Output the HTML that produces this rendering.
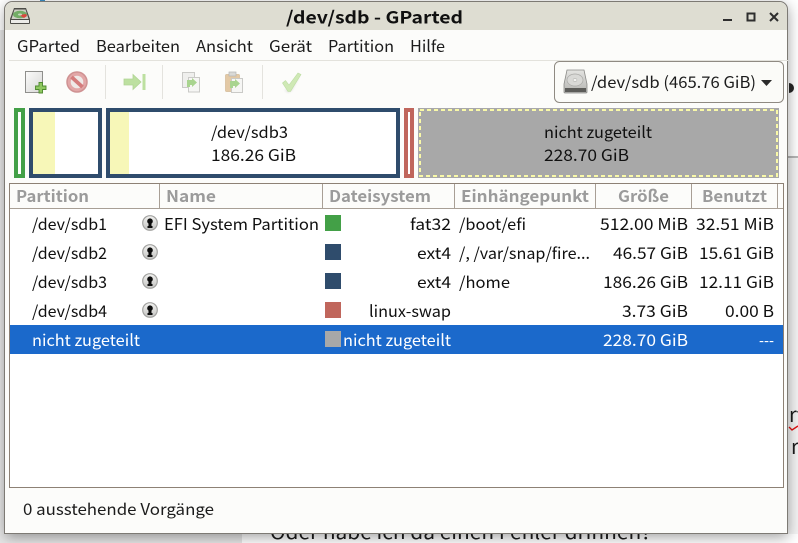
<!DOCTYPE html>
<html><head><meta charset="utf-8"><style>
html,body{margin:0;padding:0;width:798px;height:543px;overflow:hidden;background:#fff}
#w{position:absolute;left:4.5px;top:1.5px;width:783px;height:532px;border-radius:8px 8px 2px 2px;box-shadow:0 3px 14px rgba(0,0,0,.38)}
svg{position:absolute;left:0;top:0}
text{font-family:"Noto Sans CJK JP","Liberation Sans",sans-serif;font-size:16px;fill:#1c1c1c}
.h{font-weight:bold;fill:#9b9b9b}
.d{fill:#101010}
.w{fill:#fff}
</style></head><body>
<svg width="798" height="543" style="z-index:0">
<rect x="0" y="0" width="798" height="543" fill="#fff"/>
<rect x="0" y="30" width="5" height="513" fill="#e8e8e8"/>
<rect x="788" y="157" width="10" height="386" fill="#f3f3f3"/>
<rect x="788" y="156" width="10" height="2" fill="#b5b5b5"/>
<rect x="0" y="534" width="242" height="9" fill="#e6e6e6"/>
<rect x="242" y="534" width="556" height="9" fill="#fff"/>
<rect x="40" y="0" width="5" height="2" fill="#3a8fc8"/>
<text x="270" y="539" textLength="381" lengthAdjust="spacingAndGlyphs" style="font-size:20px" fill="#222">Oder habe ich da einen Fehler drinnen?</text>
<text x="789" y="422" style="font-size:20px">rt</text>
<text x="791" y="454" style="font-size:20px">r</text>
<path d="M789 427l3 3 6-4" fill="none" stroke="#e01010" stroke-width="1.4"/>
</svg>
<div id="w" style="z-index:1"></div>
<svg width="798" height="543" style="z-index:2">
<defs>
<linearGradient id="kg" x1="0" y1="0" x2="0" y2="1"><stop offset="0" stop-color="#f2f2f0"/><stop offset="1" stop-color="#c4c4c2"/></linearGradient>
<linearGradient id="dg" x1="0" y1="0" x2="0" y2="1"><stop offset="0" stop-color="#e4e4e1"/><stop offset="1" stop-color="#b4b4b1"/></linearGradient>
<linearGradient id="ng" x1="0" y1="0" x2="1" y2="1"><stop offset="0" stop-color="#fbfbfa"/><stop offset="1" stop-color="#d8d8d6"/></linearGradient>
<filter id="sh" x="-30%" y="-30%" width="160%" height="160%"><feGaussianBlur stdDeviation="1"/></filter>
<g id="k"><circle cx="0" cy="0" r="7.300" fill="url(#kg)" stroke="#a2a2a0" stroke-width="1.200"/><circle cx="0" cy="-1.800" r="2.800" fill="#0d0d0d"/><rect x="-1.500" y="-1" width="3" height="5" fill="#0d0d0d"/><rect x="-2.500" y="3" width="5" height="2" fill="#0d0d0d"/></g>
</defs>
<!-- window -->
<path d="M4.5 533.5V10a8 8 0 0 1 8-8.5H779.5a8 8 0 0 1 8 8.5V533.5Z" fill="#fcfcfa" stroke="#7d7a74"/>
<path d="M5 30V10a8 8 0 0 1 8-8H779a8 8 0 0 1 8 8V30Z" fill="#deddd2"/>
<!-- app icon -->
<g>
<path d="M14 8h12l4 11v4a1 1 0 0 1-1 1H11a1 1 0 0 1-1-1v-4Z" fill="#4d4d48"/>
<path d="M14.500 9.500h11l3 9.500H11.500Z" fill="#cfcfc6"/>
<ellipse cx="20" cy="14.500" rx="7" ry="3.800" fill="#73ad66"/>
<path d="M19 15l7-1 1 2-3 2Z" fill="#d9473e"/>
<ellipse cx="20" cy="14.500" rx="2" ry="1" fill="#c7d8bf"/>
<rect x="11" y="20" width="18" height="3" fill="#ecece8"/>
</g>
<text x="286" y="23.500" class="d" style="font-weight:bold;font-size:17px" textLength="177" lengthAdjust="spacingAndGlyphs">/dev/sdb - GParted</text>
<!-- window buttons -->
<rect x="723" y="19" width="9" height="2" fill="#2e2e2e"/>
<rect x="747.500" y="13.500" width="7" height="7" fill="none" stroke="#2e2e2e" stroke-width="2"/>
<path d="M770 13l8 8M778 13l-8 8" stroke="#2e2e2e" stroke-width="2" fill="none"/>
<!-- menu -->
<text x="17" y="52" textLength="63" lengthAdjust="spacingAndGlyphs">GParted</text>
<text x="96" y="52" textLength="84" lengthAdjust="spacingAndGlyphs">Bearbeiten</text>
<text x="196" y="52" textLength="57" lengthAdjust="spacingAndGlyphs">Ansicht</text>
<text x="269" y="52" textLength="43" lengthAdjust="spacingAndGlyphs">Gerät</text>
<text x="328" y="52" textLength="66" lengthAdjust="spacingAndGlyphs">Partition</text>
<text x="410" y="52" textLength="35" lengthAdjust="spacingAndGlyphs">Hilfe</text>
<rect x="9" y="60" width="779" height="1" fill="#e3e2dc"/>
<!-- toolbar -->
<rect x="105" y="65" width="1" height="34" fill="#e4e3de"/>
<rect x="162" y="65" width="1" height="34" fill="#e4e3de"/>
<rect x="262" y="65" width="1" height="34" fill="#e4e3de"/>
<!-- new -->
<path d="M25.500 71.500h17v21h-17Z" fill="url(#ng)" stroke="#8f8f8c"/>
<path d="M39 82.500h3.500v3.500H46v3.500h-3.500V93H39v-3.500h-3.500V86H39Z" fill="#8fc860" stroke="#4f8a30" stroke-width=".9"/>
<!-- delete -->
<circle cx="77" cy="82" r="10" fill="#e2a7a7" stroke="#cf9292" stroke-width="1.500"/>
<circle cx="77" cy="82" r="6.300" fill="#efe9e7"/>
<path d="M71.500 77l11 10" stroke="#d47c7c" stroke-width="3.800"/>
<!-- apply arrow -->
<path d="M124 79h9v-4.500l8 7.500-8 7.500v-4.500h-9Z" fill="#bde0a0" stroke="#b0d494" stroke-width=".8"/>
<rect x="142.500" y="74" width="3" height="16" fill="#bde0a0"/>
<!-- copy -->
<rect x="182.500" y="72.500" width="12" height="15" fill="#efefed" stroke="#cacac7"/>
<rect x="188.500" y="77.500" width="11" height="14.500" fill="#f6f6f4" stroke="#cacac7"/>
<path d="M187 80h5v-2l5 4.500-5 4.500v-2h-2v2h-3Z" fill="#a9d48f"/>
<!-- paste -->
<rect x="225.500" y="74.500" width="14" height="17" rx="1" fill="#e3c9a5" stroke="#d4bb98" stroke-width=".7"/>
<rect x="229" y="72" width="7" height="4" fill="#d9d9d6" stroke="#b5b5b2" stroke-width=".7"/>
<rect x="231.500" y="78.500" width="11" height="14" fill="#f6f6f4" stroke="#cacac7"/>
<path d="M230 81h5v-2l5 4.500-5 4.500v-2h-2v2h-3Z" fill="#a9d48f"/>
<!-- check -->
<path d="M284 90l4-1 11-12 2-3-9 17-4 2Z" fill="#000" opacity=".08" filter="url(#sh)"/>
<path d="M282.500 83l3-2.500 3.500 4.500 9-12 3 1.500-10.500 17h-2.500Z" fill="#cfe9b5" stroke="#bcdca2" stroke-width=".6"/>
<!-- combo -->
<rect x="554.500" y="61.500" width="229" height="41" rx="5" fill="#fbfbf8" stroke="#8f8a82"/>
<path d="M567 70h17l3 14v8a1 1 0 0 1-1 1h-21a1 1 0 0 1-1-1v-8Z" fill="url(#dg)" stroke="#8a8a87" stroke-width=".8"/>
<ellipse cx="575" cy="80" rx="8" ry="6" fill="#d9d9d6" stroke="#a9a9a6" stroke-width=".7"/>
<ellipse cx="575" cy="80" rx="2" ry="1.500" fill="#f2f2f0" stroke="#a9a9a6" stroke-width=".5"/>
<rect x="565" y="88" width="21" height="4" fill="#5c5c59"/>
<text x="591" y="88" textLength="165" lengthAdjust="spacingAndGlyphs" fill="#2b2b2b">/dev/sdb (465.76 GiB)</text>
<path d="M761 80h11l-5.500 6Z" fill="#2b2b2b"/>
<path d="M789 83a5 5 0 0 1 0 10Z" fill="#222"/>
<!-- partition bar -->
<rect x="16" y="110" width="7" height="66" fill="#fff" stroke="#43a047" stroke-width="4"/>
<rect x="31" y="110" width="69" height="66" fill="#fff" stroke="#2f4c6c" stroke-width="4"/>
<rect x="33" y="112" width="22" height="62" fill="#f7f7b8"/>
<rect x="108" y="110" width="290" height="66" fill="#fff" stroke="#2f4c6c" stroke-width="4"/>
<rect x="110" y="112" width="19" height="62" fill="#f7f7b8"/>
<text x="211" y="138" textLength="77" lengthAdjust="spacingAndGlyphs" class="d">/dev/sdb3</text>
<text x="211" y="161" textLength="85" lengthAdjust="spacingAndGlyphs" class="d">186.26 GiB</text>
<rect x="406" y="110" width="6" height="66" fill="#fff" stroke="#c0665c" stroke-width="4"/>
<rect x="418" y="108" width="361" height="70" fill="#a8a8a8"/>
<rect x="420" y="110" width="357" height="66" fill="none" stroke="#f9f9a8" stroke-width="2" stroke-dasharray="4 3"/>
<text x="544" y="138" textLength="108" lengthAdjust="spacingAndGlyphs" class="d">nicht zugeteilt</text>
<text x="544" y="161" textLength="85" lengthAdjust="spacingAndGlyphs" class="d">228.70 GiB</text>
<!-- table -->
<rect x="9.500" y="183.500" width="774" height="304" fill="#fff" stroke="#8d8175"/>
<rect x="10" y="184" width="773" height="24" fill="#fcfcfa"/>
<rect x="10" y="208" width="773" height="1" fill="#a89f95"/>
<rect x="159" y="184" width="1" height="24" fill="#a89f95"/>
<rect x="322" y="184" width="1" height="24" fill="#a89f95"/>
<rect x="454" y="184" width="1" height="24" fill="#a89f95"/>
<rect x="595" y="184" width="1" height="24" fill="#a89f95"/>
<rect x="691" y="184" width="1" height="24" fill="#a89f95"/>
<rect x="777" y="184" width="1" height="24" fill="#a89f95"/>
<text class="h" x="16" y="202" textLength="73" lengthAdjust="spacingAndGlyphs">Partition</text>
<text class="h" x="166" y="202" textLength="50" lengthAdjust="spacingAndGlyphs">Name</text>
<text class="h" x="329" y="202" textLength="102" lengthAdjust="spacingAndGlyphs">Dateisystem</text>
<text class="h" x="461" y="202" textLength="128" lengthAdjust="spacingAndGlyphs">Einhängepunkt</text>
<text class="h" x="618" y="202" textLength="51" lengthAdjust="spacingAndGlyphs">Größe</text>
<text class="h" x="702" y="202" textLength="65" lengthAdjust="spacingAndGlyphs">Benutzt</text>
<!-- selected -->
<rect x="10" y="325" width="773" height="29" fill="#1b69cb"/>
<!-- rows -->
<g class="d">
<text class="d" x="32" y="230" textLength="75" lengthAdjust="spacingAndGlyphs">/dev/sdb1</text>
<text class="d" x="32" y="259" textLength="75" lengthAdjust="spacingAndGlyphs">/dev/sdb2</text>
<text class="d" x="32" y="288" textLength="75" lengthAdjust="spacingAndGlyphs">/dev/sdb3</text>
<text class="d" x="32" y="317" textLength="75" lengthAdjust="spacingAndGlyphs">/dev/sdb4</text>
<text class="w" x="32" y="346" textLength="108" lengthAdjust="spacingAndGlyphs">nicht zugeteilt</text>
<text class="d" x="164" y="230" textLength="155" lengthAdjust="spacingAndGlyphs">EFI System Partition</text>
<text class="d" x="410" y="230" textLength="41" lengthAdjust="spacingAndGlyphs">fat32</text>
<text class="d" x="417" y="259" textLength="34" lengthAdjust="spacingAndGlyphs">ext4</text>
<text class="d" x="417" y="288" textLength="34" lengthAdjust="spacingAndGlyphs">ext4</text>
<text class="d" x="369" y="317" textLength="82" lengthAdjust="spacingAndGlyphs">linux-swap</text>
<text class="w" x="343" y="346" textLength="108" lengthAdjust="spacingAndGlyphs">nicht zugeteilt</text>
<text class="d" x="459" y="230" textLength="67" lengthAdjust="spacingAndGlyphs">/boot/efi</text>
<text class="d" x="459" y="259" textLength="131" lengthAdjust="spacingAndGlyphs">/, /var/snap/fire...</text>
<text class="d" x="459" y="288" textLength="51" lengthAdjust="spacingAndGlyphs">/home</text>
<text class="d" x="600" y="230" textLength="88" lengthAdjust="spacingAndGlyphs">512.00 MiB</text>
<text class="d" x="613" y="259" textLength="75" lengthAdjust="spacingAndGlyphs">46.57 GiB</text>
<text class="d" x="603" y="288" textLength="85" lengthAdjust="spacingAndGlyphs">186.26 GiB</text>
<text class="d" x="622" y="317" textLength="66" lengthAdjust="spacingAndGlyphs">3.73 GiB</text>
<text class="w" x="603" y="346" textLength="85" lengthAdjust="spacingAndGlyphs">228.70 GiB</text>
<text class="d" x="696" y="230" textLength="78" lengthAdjust="spacingAndGlyphs">32.51 MiB</text>
<text class="d" x="699" y="259" textLength="75" lengthAdjust="spacingAndGlyphs">15.61 GiB</text>
<text class="d" x="699" y="288" textLength="75" lengthAdjust="spacingAndGlyphs">12.11 GiB</text>
<text class="d" x="725" y="317" textLength="49" lengthAdjust="spacingAndGlyphs">0.00 B</text>
<text class="w" x="759" y="346" textLength="15" lengthAdjust="spacingAndGlyphs">---</text>
</g>
<!-- colour squares -->
<rect x="325" y="215" width="16" height="16" fill="#43a047"/>
<rect x="325" y="244" width="16" height="16" fill="#2f4c6c"/>
<rect x="325" y="273" width="16" height="16" fill="#2f4c6c"/>
<rect x="325" y="302" width="16" height="16" fill="#c0665c"/>
<rect x="325" y="331" width="16" height="16" fill="#a8a8a8"/>
<!-- key icons -->
<use href="#k" x="150" y="223"/>
<use href="#k" x="150" y="252"/>
<use href="#k" x="150" y="281"/>
<use href="#k" x="150" y="310"/>
<!-- status -->
<text x="23" y="515" textLength="191" lengthAdjust="spacingAndGlyphs" fill="#333">0 ausstehende Vorgänge</text>
</svg>
</body></html>
